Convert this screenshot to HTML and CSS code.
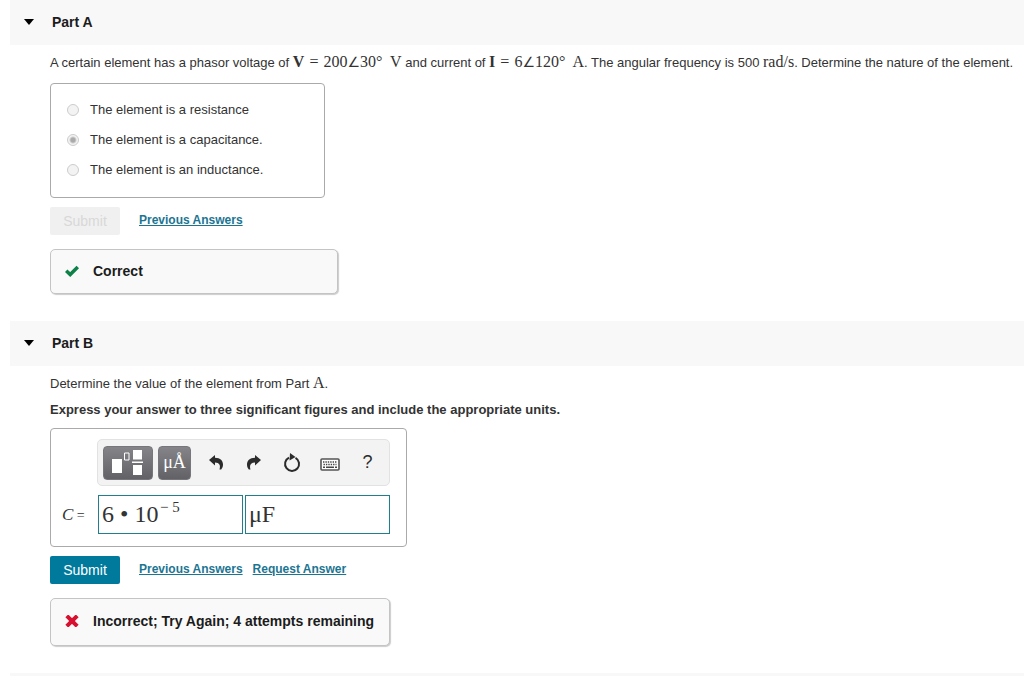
FILE: index.html
```
<!DOCTYPE html>
<html lang="en">

<head>
    <meta charset="UTF-8">
    <title>Phasor element</title>
    <link rel="stylesheet" href="styles.css">
</head>

<body>
    <section class="part">
        <h2 class="part-head">
            <svg class="arrow" viewBox="0 0 10 6"><path d="M0 0h10L5 6z"/></svg>
            Part A
        </h2>
        <div class="part-body">
            <p class="question">A certain element has a phasor voltage of <span class="math"><b>V</b> <span class="equals">=</span> 200<span class="angle">∠</span>30°&nbsp; V</span> and current of <span class="math"><b>I</b> <span class="equals">=</span> 6<span class="angle">∠</span>120°&nbsp; A</span>. The angular frequency is 500 <span class="math">rad/s</span>. Determine the nature of the element.</p>
            <form>
                <div class="box choices">
                    <label><input type="radio" name="nature" disabled>The element is a resistance</label>
                    <label><input type="radio" name="nature" checked disabled>The element is a capacitance.</label>
                    <label><input type="radio" name="nature" disabled>The element is an inductance.</label>
                </div>
                <div class="actions">
                    <button type="submit" class="submit" disabled>Submit</button>
                    <a href="#">Previous Answers</a>
                </div>
            </form>
            <div class="feedback correct">
                <svg class="mark" viewBox="0 0 14 12"><path d="M1.200 5.800L5.200 9.600L12.800 2" fill="none" stroke="#0d8147" stroke-width="3.500"/></svg>
                Correct
            </div>
        </div>
    </section>

    <section class="part">
        <h2 class="part-head">
            <svg class="arrow" viewBox="0 0 10 6"><path d="M0 0h10L5 6z"/></svg>
            Part B
        </h2>
        <div class="part-body">
            <p class="question">Determine the value of the element from Part <span class="math">A</span>.</p>
            <p class="instructions">Express your answer to three significant figures and include the appropriate units.</p>
            <form>
                <div class="box answer">
                    <div class="toolbar">
                        <button type="button" class="tool dark wide" aria-label="Templates">
                            <svg width="34" height="26" viewBox="0 0 34 26">
                                <path d="M1 9h10v14H1zM22 0h9v9.500h-9zM21 11.500h11V13H21zM22 15h9v10h-9z" fill="#fff"/>
                                <path d="M13.500 3h4.500v7h-4.500z" fill="none" stroke="#fff"/>
                            </svg>
                        </button>
                        <button type="button" class="tool dark">μÅ</button>
                        <button type="button" class="tool" aria-label="Undo">
                            <svg width="14" height="15" viewBox="0 0 14 15"><path d="M0 5L6 0v2.800c5.500 0 8 3.200 8 6.800 0 2-.6 3.600-1.800 4.800H10.500C11.800 10.500 10.500 7.800 6 7.600V10.500z"/></svg>
                        </button>
                        <button type="button" class="tool" aria-label="Redo">
                            <svg width="14" height="15" viewBox="0 0 14 15"><path d="M14 5L8 0v2.800C2.500 2.800 0 6 0 9.600c0 2 .6 3.600 1.800 4.800H3.500C2.200 10.500 3.500 7.800 8 7.600V10.500z"/></svg>
                        </button>
                        <button type="button" class="tool" aria-label="Reset">
                            <svg width="18" height="20" viewBox="0 0 18 20"><path d="M12.500 4.800A7 7 0 1 1 6 4.600" fill="none" stroke="#2b2b2b" stroke-width="2"/><path d="M7 0l5.500 4L6.500 7.500z"/></svg>
                        </button>
                        <button type="button" class="tool keyboard" aria-label="Keyboard">
                            <svg width="20" height="13" viewBox="0 0 20 13"><rect x="1" y="1" width="18" height="11" rx="1" fill="#fff" stroke="#555" stroke-width="1.600"/><path d="M3 4h14M3.500 6.500h13" stroke="#444" stroke-width="1.400" stroke-dasharray="1.400 1"/><path d="M3 9.300h2M6 9.300h8M15 9.300h2" stroke="#444" stroke-width="1.400"/></svg>
                        </button>
                        <button type="button" class="tool help">?</button>
                    </div>
                    <div class="fields">
                        <label for="value"><i>C</i> =</label>
                        <div class="field">
                            <input type="text" id="value" class="base" value="6 • 10">
                            <input type="text" class="power" aria-label="Exponent" value="− 5">
                        </div>
                        <input type="text" class="field units" aria-label="Units" value="μF">
                    </div>
                </div>
                <div class="actions">
                    <button type="submit" class="submit">Submit</button>
                    <a href="#">Previous Answers</a>
                    <a href="#">Request Answer</a>
                </div>
            </form>
            <div class="feedback incorrect">
                <svg class="mark" viewBox="0 0 14 12"><path d="M1.800 .8l10.400 10.400M12.200 .8L1.800 11.200" stroke="#d8102f" stroke-width="4"/></svg>
                Incorrect; Try Again; 4 attempts remaining
            </div>
        </div>
    </section>
    <footer class="footer"></footer>
</body>

</html>
```

FILE: styles.css
```
* {
    box-sizing: border-box;
    margin: 0;
    padding: 0;
}
body {
    padding-left: 10px;
    background: #fff;
    color: #333;
    font: 13px/20px "Liberation Sans", Arial, sans-serif;
}
.part-head {
    display: flex;
    align-items: center;
    gap: 18px;
    height: 45px;
    padding: 0 14px 2px;
    background: #f8f8f8;
    color: #1c1c1c;
    font-size: 14px;
}
.arrow {
    width: 10px;
    height: 6px;
}
.part-body {
    padding: 8px 4px 27px 40px;
}
.math {
    font-family: "Liberation Serif", "Times New Roman", serif;
    font-size: 16px;
    line-height: 16px;
}
.equals {
    padding: 0 1px;
}
.angle {
    font-family: "DejaVu Sans", sans-serif;
    font-size: 14px;
}
.box {
    border: 1px solid #aaa;
    border-radius: 4px;
}
.choices {
    display: flex;
    flex-direction: column;
    gap: 10px;
    width: 275px;
    margin-top: 10px;
    padding: 16px 16px 17px;
}
.choices label {
    display: flex;
    align-items: center;
    gap: 11px;
}
.choices input {
    appearance: none;
    width: 12px;
    height: 12px;
    border: 1px solid #ccc;
    border-radius: 50%;
    background: #f3f3f3;
}
.choices input:checked {
    background: radial-gradient(circle, #aaa 2px, #f3f3f3 4px);
}
.actions {
    display: flex;
    gap: 10px;
    margin-top: 9px;
    font-size: 12px;
    line-height: 26px;
}
.actions a {
    color: #1b7592;
    font-weight: bold;
}
.submit {
    width: 70px;
    height: 28px;
    margin-right: 9px;
    border: 0;
    border-radius: 2px;
    background: #007a9c;
    color: #fff;
    font: 14px "Liberation Sans", Arial, sans-serif;
}
.submit:disabled {
    background: #f0f0f0;
    color: #d8d8d8;
}
.feedback {
    display: flex;
    align-items: center;
    gap: 14px;
    margin-top: 14px;
    padding: 0 14px 2px;
    border: 1px solid #c4c4c4;
    border-radius: 5px;
    box-shadow: 1px 1px 1px #ccc;
    background: #f9f9f9;
    color: #1c1c1c;
    font-weight: bold;
    font-size: 14px;
}
.correct {
    width: 288px;
    height: 45px;
}
.incorrect {
    width: 340px;
    height: 48px;
}
.mark {
    width: 14px;
    height: 12px;
    flex: none;
}
.instructions {
    margin-top: 6px;
    font-weight: bold;
}
.answer {
    width: 357px;
    margin-top: 8px;
    padding: 10px 16px 12px 11px;
}
.toolbar {
    display: flex;
    align-items: center;
    gap: 5px;
    height: 47px;
    margin-left: 35px;
    padding-left: 5px;
    border: 1px solid #e2e2e2;
    border-radius: 5px;
    background: #f3f3f3;
}
.tool {
    display: flex;
    align-items: center;
    justify-content: center;
    width: 33px;
    height: 34px;
    border: 0;
    background: none;
    color: #2b2b2b;
    fill: #2b2b2b;
}
.dark {
    border: 1px solid #77777b;
    border-radius: 4px;
    background: linear-gradient(#858589, #626266);
    color: #fff;
    font: 18px "Liberation Serif", "Times New Roman", serif;
}
.dark + .tool:not(.dark) {
    margin-left: 3px;
}
.wide {
    width: 50px;
}
.keyboard {
    padding-top: 4px;
}
.help {
    font: 18px "Liberation Sans", Arial, sans-serif;
}
.fields {
    display: flex;
    align-items: center;
    gap: 2px;
    margin-top: 9px;
}
.fields label {
    width: 34px;
    font: 14px "Liberation Serif", "Times New Roman", serif;
}
.fields i {
    font-size: 17px;
}
.fields input {
    min-width: 0;
    border: 0;
    outline: 0;
    background: none;
    color: #333;
    font: 24px "Liberation Serif", "Times New Roman", serif;
}
.fields .field {
    display: flex;
    flex: 1;
    height: 39px;
    padding: 0 3px;
    border: 1px solid #1f7f8f;
}
.fields .base {
    width: 58px;
}
.fields .power {
    width: 40px;
    height: 22px;
    font-size: 15px;
}
.footer {
    height: 4px;
    background: #f8f8f8;
}
```
